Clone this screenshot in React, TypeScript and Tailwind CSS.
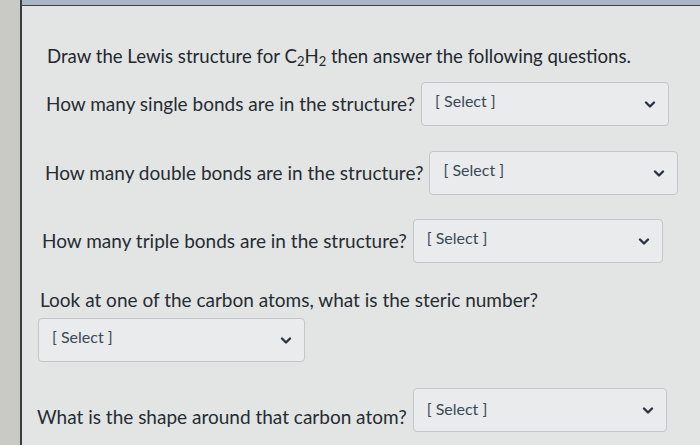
import React from "react";

function Chevron() {
  return (
    <svg width="12" height="9" viewBox="0 0 12 9" className="shrink-0">
      <path d="M2 2.5 L6 6.5 L10 2.5" fill="none" stroke="#2a3440" strokeWidth="2.4" strokeLinecap="round" strokeLinejoin="round" />
    </svg>
  );
}

function Select({ w, tm = "-mt-[6px]" }: { w: string; tm?: string }) {
  return (
    <div className={`${w} h-[44px] shrink-0 rounded-[4px] border border-[#c3c7cb] bg-[#e9ebec] flex items-center justify-between pl-[13px] pr-[12px]`}>
      <span className={`text-[16px] text-[#3b4956] ${tm}`}>[ Select ]</span>
      <Chevron />
    </div>
  );
}

function Row({ q, w, mt, qm = "mt-[1px]", tm }: { q: React.ReactNode; w: string; mt: string; qm?: string; tm?: string }) {
  return (
    <div className={`flex items-center ${mt}`}>
      <span className={`text-[19px] text-[#262c31] mr-[6px] ${qm}`}>{q}</span>
      <Select w={w} tm={tm} />
    </div>
  );
}

export default function App() {
  return (
    <div className="w-[700px] h-[445px] overflow-hidden flex bg-[#c9c9c5]" style={{ fontFamily: "Lato, 'Open Sans', sans-serif" }}>
      <div className="w-[20px] shrink-0" />
      <div className="flex-1 flex flex-col border-l-[2px] border-[#3a3d40] bg-[#e3e5e5]">
        <div className="h-[6px] bg-[#a9b6c6] border-b border-[#3c4248]" />
        <div className="flex flex-col pl-[25px]">
          <div className="mt-[38px] text-[18.6px] leading-[24px] text-[#22282d]">
            Draw the Lewis structure for C<sub className="text-[13px]">2</sub>H<sub className="text-[13px]">2</sub> then answer the following questions.
          </div>
          <div className="-ml-[1px]">
            <Row mt="mt-[14px]" q="How many single bonds are in the structure?" w="w-[248px]" />
          </div>
          <div className="-ml-[2px]">
            <Row mt="mt-[25px]" q="How many double bonds are in the structure?" w="w-[249px]" />
          </div>
          <div className="-ml-[5px]">
            <Row mt="mt-[24px]" q="How many triple bonds are in the structure?" w="w-[250px]" />
          </div>
          <div className="-ml-[7px] mt-[25px] text-[19px] leading-[24px] text-[#262c31]">
            Look at one of the carbon atoms, what is the steric number?
          </div>
          <div className="-ml-[9px] mt-[6px]">
            <Select w="w-[267px]" />
          </div>
          <div className="-ml-[10px]">
            <Row mt="mt-[26px]" q="What is the shape around that carbon atom?" w="w-[254px]" qm="mt-[14px]" tm="-mt-[2px]" />
          </div>
        </div>
      </div>
    </div>
  );
}
